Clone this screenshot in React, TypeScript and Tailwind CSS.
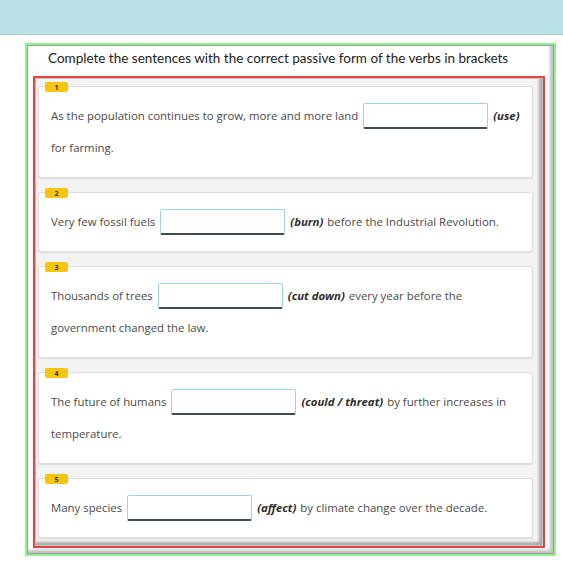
import React from "react";

type Part = { t: "text"; v: string } | { t: "input" } | { t: "hint"; v: string };

type Item = {
  n: number;
  lines: Part[][];
};

const items: Item[] = [
  {
    n: 1,
    lines: [
      [
        { t: "text", v: "As the population continues to grow, more and more land" },
        { t: "input" },
        { t: "hint", v: "(use)" },
      ],
      [{ t: "text", v: "for farming." }],
    ],
  },
  {
    n: 2,
    lines: [
      [
        { t: "text", v: "Very few fossil fuels" },
        { t: "input" },
        { t: "hint", v: "(burn)" },
        { t: "text", v: "before the Industrial Revolution." },
      ],
    ],
  },
  {
    n: 3,
    lines: [
      [
        { t: "text", v: "Thousands of trees" },
        { t: "input" },
        { t: "hint", v: "(cut down)" },
        { t: "text", v: "every year before the" },
      ],
      [{ t: "text", v: "government changed the law." }],
    ],
  },
  {
    n: 4,
    lines: [
      [
        { t: "text", v: "The future of humans" },
        { t: "input" },
        { t: "hint", v: "(could / threat)" },
        { t: "text", v: "by further increases in" },
      ],
      [{ t: "text", v: "temperature." }],
    ],
  },
  {
    n: 5,
    lines: [
      [
        { t: "text", v: "Many species" },
        { t: "input" },
        { t: "hint", v: "(affect)" },
        { t: "text", v: "by climate change over the decade." },
      ],
    ],
  },
];

function Line({ parts }: { parts: Part[] }) {
  return (
    <div className="flex h-[32px] items-center gap-[4px] whitespace-nowrap">
      {parts.map((p, i) => {
        if (p.t === "input")
          return (
            <input
              key={i}
              className="mx-[1px] h-[26px] w-[125px] rounded-[2px] border border-b-2 border-[#9dd3ea] border-b-[#3f4c52] bg-white outline-none"
            />
          );
        if (p.t === "hint")
          return (
            <span key={i} className="font-bold italic text-[#2e2e2e]">
              {p.v}
            </span>
          );
        return <span key={i}>{p.v}</span>;
      })}
    </div>
  );
}

function Card({ item }: { item: Item }) {
  return (
    <div className="relative rounded-[3px] border border-[#dddddd] bg-white pt-[13px] pb-[13px] pl-[12px] shadow-[0_1px_1px_rgba(0,0,0,0.1)]">
      <div className="absolute -top-[5px] left-[6px] flex h-[10px] w-[23px] items-center justify-center rounded-[2px] bg-[#f6c60f] text-[7px] leading-none font-bold text-[#333]">
        {item.n}
      </div>
      {item.lines.map((l, i) => (
        <Line key={i} parts={l} />
      ))}
    </div>
  );
}

export default function App() {
  return (
    <div className="h-[570px] w-[563px] overflow-hidden bg-white font-['Open_Sans',sans-serif]">
      <div className="h-[35px] border-b border-[#a7cfd4] bg-[#b9e1e5]" />
      <div className="mt-[8px] ml-[25px] h-[513px] w-[531px] border-2 border-[#8ef28e]">
        <div className="flex h-full flex-col border border-[#9b9b9b] bg-white pr-[8px] pb-[5px] pl-[5px] shadow-[inset_-3px_-3px_3px_rgba(0,0,0,0.25)]">
          <div className="h-[30px] pt-[2px] pl-[15px] text-[13.5px] leading-[20px] text-[#222] font-['Lato',sans-serif]">
            Complete the sentences with the correct passive form of the verbs in brackets
          </div>
          <div className="flex-1 border-2 border-[#e84343]">
            <div className="flex h-full flex-col gap-[14px] border border-[#c4c4c4] bg-[#f3f3f3] pt-[7px] pr-[9px] pl-[2px] text-[11.4px] text-[#4a4a4a] shadow-[inset_-3px_-3px_3px_rgba(0,0,0,0.3)]">
              {items.map((it) => (
                <Card key={it.n} item={it} />
              ))}
            </div>
          </div>
        </div>
      </div>
    </div>
  );
}
